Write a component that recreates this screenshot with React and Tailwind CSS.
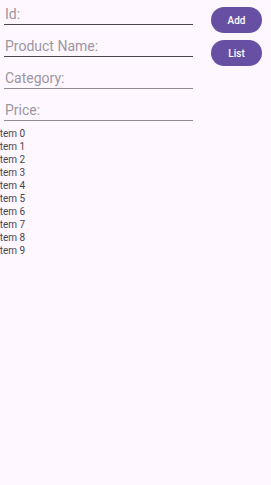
export default function App() {
  const fields = [
    { label: 'Id:', h: 'h-[25px]', line: 'border-[#4a4550]' },
    { label: 'Product Name:', h: 'h-[32px]', line: 'border-[#4a4550]' },
    { label: 'Category:', h: 'h-[32px]', line: 'border-[#8e8b92]' },
    { label: 'Price:', h: 'h-[32px]', line: 'border-[#8e8b92]' },
  ]
  const items = Array.from({ length: 10 }, (_, i) => `Item ${i}`)

  return (
    <div className="min-h-screen w-full bg-[#fef7ff] overflow-hidden" style={{ fontFamily: 'Roboto, "Noto Sans", sans-serif' }}>
      <div className="flex">
        <div className="w-[189px] ml-[4px] flex flex-col">
          {fields.map((f) => (
            <div key={f.label} className={`${f.h} flex items-end border-b ${f.line} pb-[2px]`}>
              <span className="text-[14px] leading-4 text-[#9c96a1] pl-[1px]">{f.label}</span>
            </div>
          ))}
        </div>
        <div className="ml-auto mr-[9px] pt-[7px] flex flex-col gap-[7px]">
          <button className="w-[51px] h-[26px] rounded-full bg-[#6750a4] text-white text-[10px] font-medium">Add</button>
          <button className="w-[51px] h-[26px] rounded-full bg-[#6750a4] text-white text-[10px] font-medium">List</button>
        </div>
      </div>
      <div className="pt-[6px] ml-[-3px] flex flex-col">
        {items.map((t) => (
          <div key={t} className="text-[10px] leading-[13px] text-[#49454f]">{t}</div>
        ))}
      </div>
    </div>
  )
}
